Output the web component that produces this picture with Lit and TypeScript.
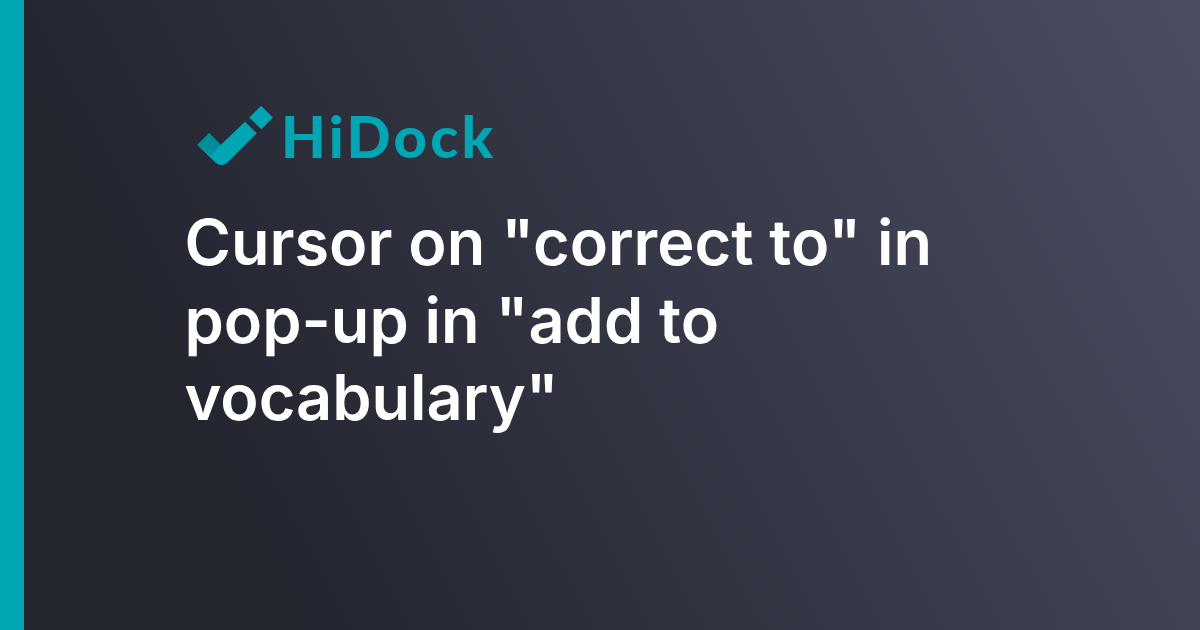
import { LitElement, html, css } from "lit";
import { customElement } from "lit/decorators.js";

@customElement("app-root")
export class AppRoot extends LitElement {
  static styles = css`
    :host { display: block; width: 1200px; height: 630px; overflow: hidden; }
    .page { display: flex; width: 1200px; height: 630px; background: linear-gradient(63deg, #23252f 20%, #4b4e62 100%); }
    .bar { flex: 0 0 24px; background: #00a6b4; }
    .content { flex: 1; display: flex; flex-direction: column; padding: 104px 200px 0 160.5px; }
    .logo { display: flex; align-items: center; gap: 6px; height: 62px; margin-left: 12.5px; }
    .mark { display: block; flex: none; }
    .name { font: 900 58px/62px Lato, sans-serif; color: #00a6b4; letter-spacing: 3.2px; padding-top: 1px; }
    h1 { margin: 38px 0 0; font: 600 63px/77.5px Inter, sans-serif; color: #fff; }
  `;
  render() {
    return html`<div class="page">
      <div class="bar"></div>
      <div class="content">
        <div class="logo">
          <svg class="mark" width="78" height="62" viewBox="197 104 78 62">
            <path fill="#00a6b4" d="M261 105.7 272.9 117.5 261.5 129.3 249.3 117.7Z"/>
            <path fill="#00a6b4" d="M245 121.7 256.7 133.3 227.5 162.5Q221.5 167.5 215.5 162.5L197.3 145 209.3 133.3 220.7 145Z"/>
            <path fill="#018d9b" d="M197.3 145 209.3 133.3 220.7 145 211 155.5 Z"/>
          </svg>
          <span class="name">HiDock</span>
        </div>
        <h1>Cursor on "correct to" in pop-up in "add to vocabulary"</h1>
      </div>
    </div>`;
  }
}
